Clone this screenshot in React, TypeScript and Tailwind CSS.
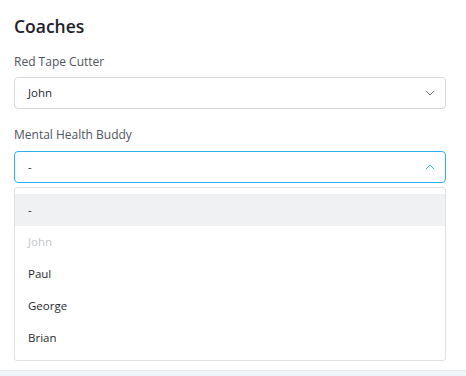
import { ChevronDown, ChevronUp } from "lucide-react"

const options = [
    { name: "-", disabled: false, active: true },
    { name: "John", disabled: true, active: false },
    { name: "Paul", disabled: false, active: false },
    { name: "George", disabled: false, active: false },
    { name: "Brian", disabled: false, active: false },
]

const App = () => {
    return (
        <div className="w-[466px] h-[376px] flex flex-col bg-white" style={{ fontFamily: '"Open Sans", "Noto Sans", sans-serif' }}>
            <div className="h-[371px] px-[14px] pt-[14px] border-b border-[#e3e6ea]">
                <h1 className="text-[17.5px] font-semibold text-[#1f2329] leading-[24px] mb-[16px]">Coaches</h1>

                <label className="block text-[12px] text-[#50555d] leading-[16px] mb-[7px]">Red Tape Cutter</label>
                <div className="h-[32px] w-[432px] flex items-center justify-between pl-[13px] pr-[7px] border border-[#d5d8dd] rounded-[4px]">
                    <span className="text-[11.5px] text-[#26292e]">John</span>
                    <ChevronDown size={16} strokeWidth={1.4} className="text-[#6b7078]" />
                </div>

                <label className="block text-[12px] text-[#50555d] leading-[16px] mt-[18px] mb-[8px]">Mental Health Buddy</label>
                <div className="h-[32px] w-[432px] flex items-center justify-between pl-[13px] pr-[7px] border border-[#29b3f0] rounded-[4px]">
                    <span className="text-[11.5px] text-[#26292e]">-</span>
                    <ChevronUp size={16} strokeWidth={1.4} className="text-[#29b3f0]" />
                </div>

                <div className="mt-[4px] w-[432px] border border-[#dfe1e5] rounded-[3px] py-[6px]">
                    {options.map((o) => (
                        <div
                            key={o.name}
                            className={`h-[32px] flex items-center px-[13px] text-[11.5px] ${o.active ? "bg-[#f0f1f3]" : ""} ${o.disabled ? "text-[#c3c6cb]" : "text-[#26292e]"}`}
                        >
                            {o.name}
                        </div>
                    ))}
                </div>
            </div>
            <div className="flex-1 bg-[#f3f6f9]" />
        </div>
    )
}

export default App
